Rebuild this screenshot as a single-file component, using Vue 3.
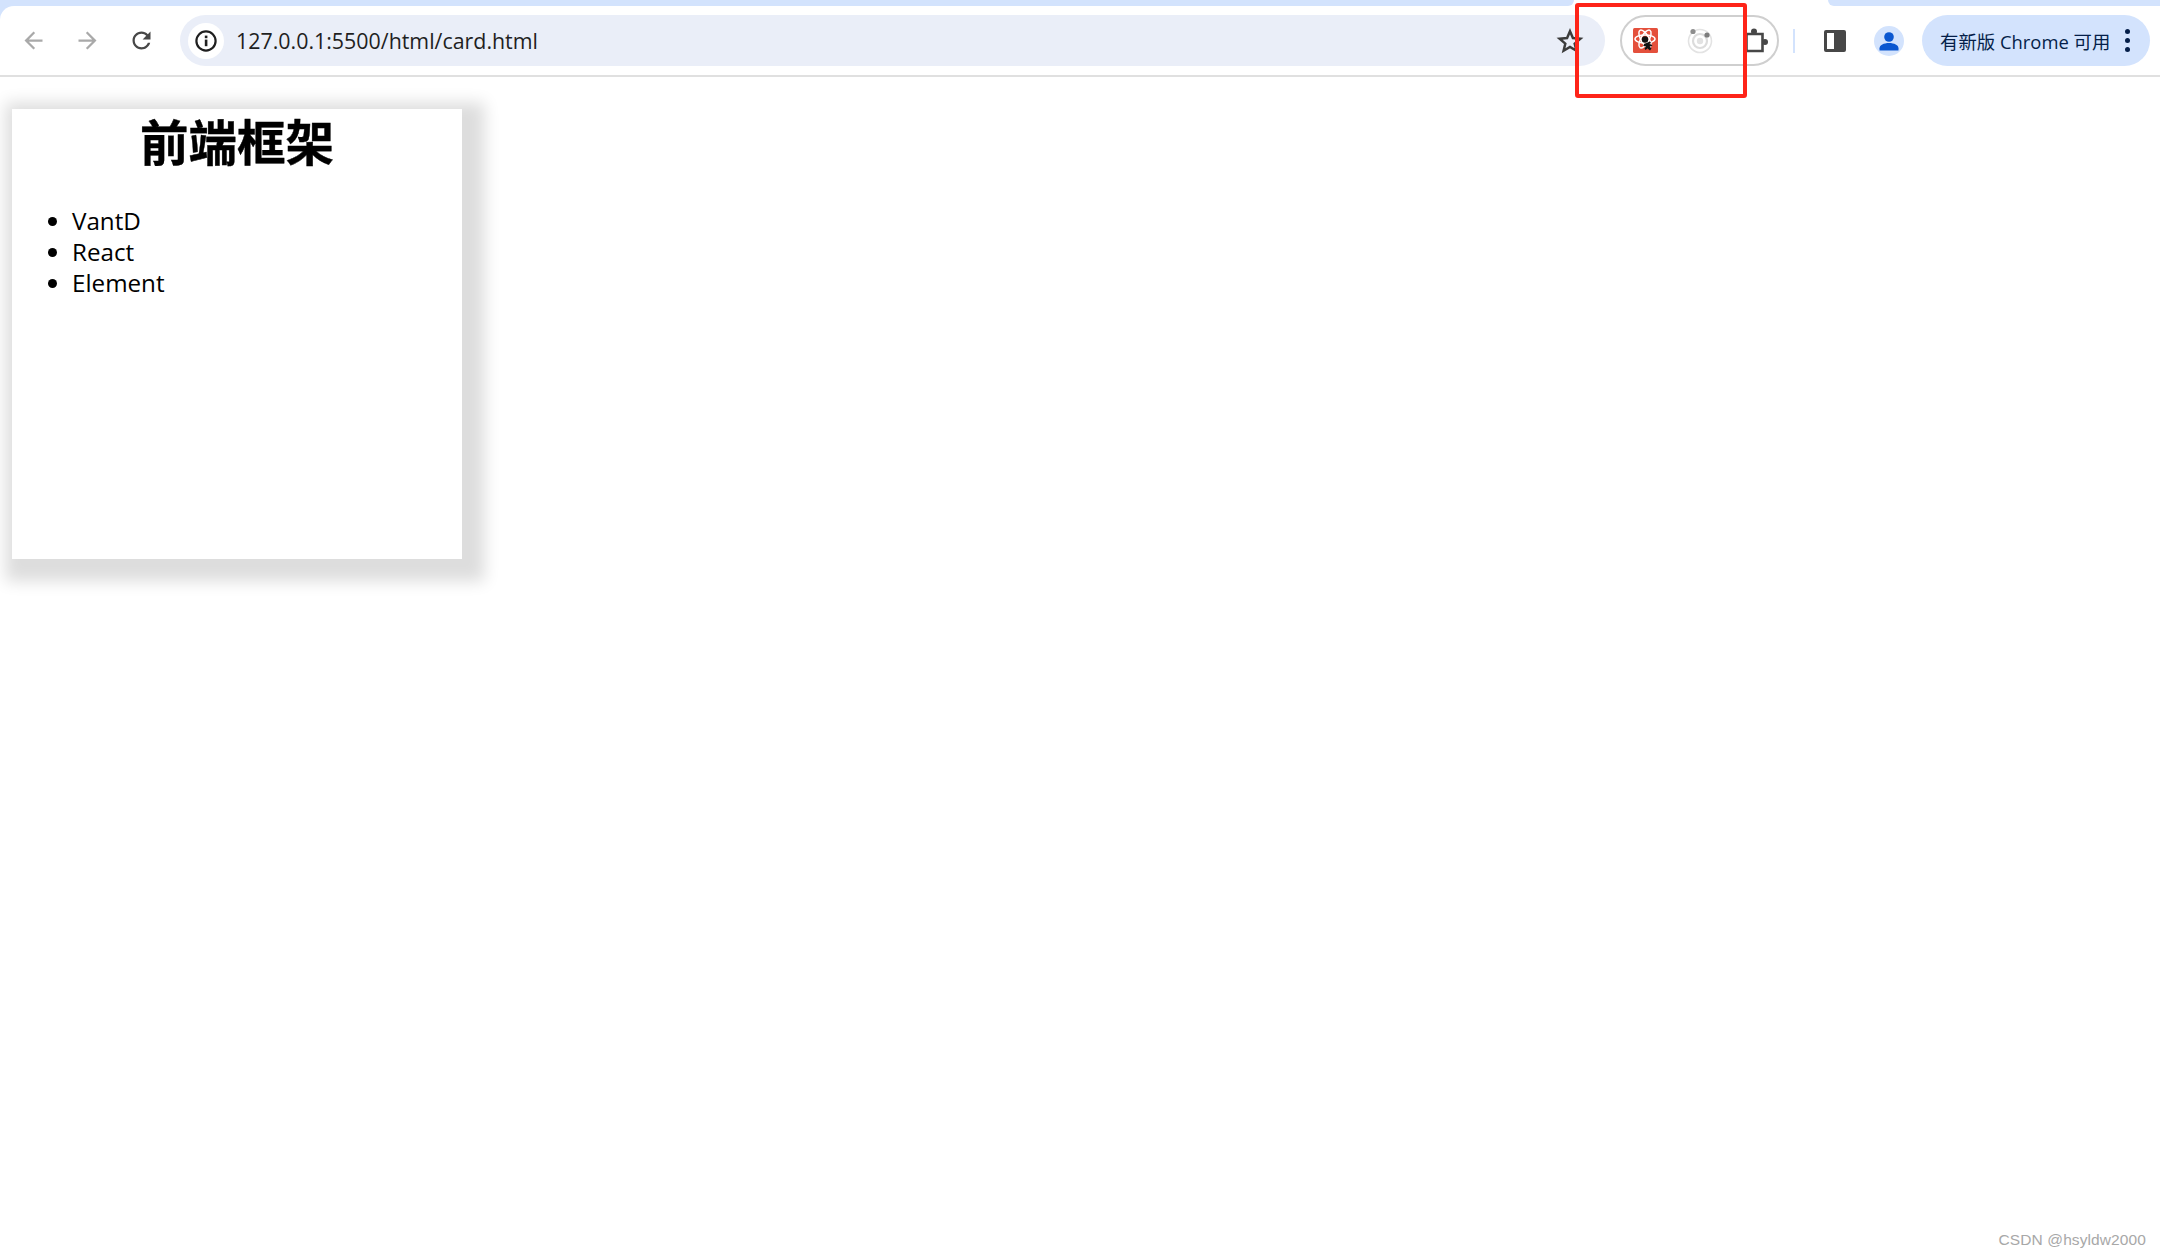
<script setup>
const frameworks = ['VantD', 'React', 'Element']
</script>

<template>
  <div class="page">
    <header class="chrome">
      <div class="tabstrip">
        <div class="strip-left"></div>
        <div class="strip-gap"></div>
        <div class="strip-right"></div>
      </div>
      <div class="toolbar">
        <nav class="nav">
          <svg class="ico ghost" viewBox="0 0 24 24"><path d="M20 11H7.83l5.59-5.59L12 4l-8 8 8 8 1.41-1.41L7.83 13H20v-2z"/></svg>
          <svg class="ico ghost" viewBox="0 0 24 24"><path d="M4 11h12.17l-5.59-5.59L12 4l8 8-8 8-1.41-1.41L16.17 13H4v-2z"/></svg>
          <svg class="ico dark" viewBox="0 0 24 24"><path d="M17.65 6.35C16.2 4.9 14.21 4 12 4c-4.42 0-7.99 3.58-7.99 8s3.57 8 7.99 8c3.73 0 6.84-2.55 7.73-6h-2.08c-.82 2.33-3.04 4-5.65 4-3.31 0-6-2.69-6-6s2.69-6 6-6c1.66 0 3.14.69 4.22 1.78L13 11h7V4l-2.35 2.35z"/></svg>
        </nav>
        <div class="omnibox">
          <span class="site-info">
            <svg viewBox="0 0 24 24" width="24" height="24"><circle cx="12" cy="12" r="9.6" fill="none" stroke="#1f1f1f" stroke-width="2.2"/><rect x="10.8" y="10.6" width="2.6" height="6.6" fill="#1f1f1f"/><rect x="10.8" y="6.6" width="2.6" height="2.6" fill="#1f1f1f"/></svg>
          </span>
          <span class="url">127.0.0.1:5500/html/card.html</span>
          <svg class="star" viewBox="0 0 24 24" width="28" height="28"><path d="M12 3.6l2.500 5.900 6.400.5-4.900 4.200 1.500 6.200L12 17.100l-5.500 3.300L8 14.200 3.100 10l6.400-.5z" fill="none" stroke="#3c3c3c" stroke-width="2.100" stroke-linejoin="miter"/></svg>
        </div>
        <div class="extensions">
          <svg class="ext-atom" viewBox="0 0 25 25" width="25" height="25">
            <rect width="25" height="25" rx="1.500" fill="#e4503c"/>
            <g fill="none" stroke="#fff" stroke-width="1.500">
              <ellipse cx="12" cy="11" rx="10" ry="4"/>
              <ellipse cx="12" cy="11" rx="10" ry="4" transform="rotate(60 12 11)"/>
              <ellipse cx="12" cy="11" rx="10" ry="4" transform="rotate(120 12 11)"/>
            </g>
            <circle cx="12" cy="11.500" r="3.200" fill="#111"/>
            <path d="M11 16l6-2.500 1 1.500-2 1 2.500.5 1 1.500-3 .5 2 2-1.500 2-2.500-2-2 1.500-1-1.500 1.500-2-2.500-.5z" fill="#111"/>
          </svg>
          <svg class="ext-ring" viewBox="0 0 26 26" width="26" height="26">
            <circle cx="13" cy="13" r="11.500" fill="none" stroke="#e3e3e3" stroke-width="1.600"/>
            <circle cx="13" cy="13" r="7" fill="none" stroke="#dcdcdc" stroke-width="2.200"/>
            <circle cx="13" cy="13" r="3.200" fill="#e2e2e2"/>
            <circle cx="6" cy="3.500" r="2.600" fill="#8d8d8d"/>
            <circle cx="20" cy="7" r="2.600" fill="#7d7d7d"/>
          </svg>
          <svg class="ext-puzzle" viewBox="0 0 26 26" width="26" height="26">
            <path d="M3.500 6h16v17h-16z" fill="none" stroke="#474747" stroke-width="2.600"/>
            <circle cx="11" cy="3.500" r="3" fill="#474747"/>
            <circle cx="22" cy="14" r="3" fill="#474747"/>
          </svg>
        </div>
        <span class="divider"></span>
        <span class="side-panel"><span class="side-panel-fill"></span></span>
        <span class="avatar">
          <svg viewBox="0 0 24 24" width="24" height="24"><circle cx="12" cy="8" r="4.800" fill="#0b57d0"/><path d="M2.500 21.500v-2.200c0-3.200 4.300-5.300 9.500-5.300s9.500 2.100 9.500 5.300v2.200z" fill="#0b57d0"/></svg>
        </span>
        <div class="update">
          <span class="update-text">有新版 Chrome 可用</span>
          <span class="dots"><i></i><i></i><i></i></span>
        </div>
      </div>
    </header>

    <main class="content">
      <section class="card">
        <h1>前端框架</h1>
        <ul>
          <li v-for="name in frameworks" :key="name">{{ name }}</li>
        </ul>
      </section>
    </main>

    <div class="annotation"></div>
    <div class="watermark">CSDN @hsyldw2000</div>
  </div>
</template>

<style scoped>
.page {
  position: relative;
  height: 1258px;
  overflow: hidden;
  background: #fff;
  font-family: "Open Sans", "Noto Sans CJK SC", sans-serif;
}
.chrome {
  background: #d3e3fd;
}
.tabstrip {
  display: flex;
  height: 6px;
  background: #fff;
}
.strip-left {
  width: 1574px;
  background: #d3e3fd;
  border-bottom-right-radius: 8px;
}
.strip-gap {
  width: 254px;
}
.strip-right {
  flex: 1;
  background: #d3e3fd;
  border-bottom-left-radius: 8px;
}
.toolbar {
  display: flex;
  align-items: center;
  height: 69px;
  background: #fff;
  border-bottom: 2px solid #e0e0e0;
  border-top-left-radius: 14px;
}
.toolbar > * {
  flex-shrink: 0;
}
.nav {
  display: flex;
  gap: 27px;
  width: 180px;
  padding-left: 20px;
  box-sizing: border-box;
}
.ico {
  width: 27px;
  height: 27px;
}
.ghost { fill: #a9a9a9; }
.dark { fill: #474747; }
.omnibox {
  display: flex;
  align-items: center;
  width: 1425px;
  height: 51px;
  padding: 0 21px 0 8px;
  box-sizing: border-box;
  background: #eaeef8;
  border-radius: 26px;
}
.site-info {
  display: flex;
  align-items: center;
  justify-content: center;
  width: 36px;
  height: 36px;
  border-radius: 50%;
  background: #fff;
}
.url {
  flex: 1;
  margin-left: 12px;
  font-size: 21.4px;
  color: #1f1f1f;
  white-space: nowrap;
}
.extensions {
  display: flex;
  align-items: center;
  width: 159px;
  height: 51px;
  margin-left: 15px;
  padding-left: 11px;
  box-sizing: border-box;
  border: 2px solid #cfcfcf;
  border-radius: 26px;
}
.ext-ring { margin-left: 29px; }
.ext-puzzle { margin-left: 30px; }
.divider {
  width: 2px;
  height: 24px;
  margin-left: 14px;
  background: #d3e3fd;
}
.side-panel {
  display: flex;
  justify-content: flex-end;
  width: 22px;
  height: 22px;
  margin-left: 29px;
  box-sizing: border-box;
  border: 3px solid #474747;
  border-radius: 2px;
  background: #fff;
}
.side-panel-fill {
  width: 9px;
  background: #474747;
}
.avatar {
  display: flex;
  align-items: center;
  justify-content: center;
  width: 30px;
  height: 30px;
  margin-left: 28px;
  border-radius: 50%;
  background: #d3e3fd;
}
.update {
  display: flex;
  align-items: center;
  width: 228px;
  height: 51px;
  margin-left: 18px;
  padding-left: 18px;
  box-sizing: border-box;
  background: #d3e3fd;
  border-radius: 26px;
  color: #041e49;
}
.update-text {
  font-size: 18.4px;
  white-space: nowrap;
}
.dots {
  position: absolute;
  left: 2125px;
  top: 29px;
  display: flex;
  flex-direction: column;
  gap: 4px;
}
.dots i {
  width: 5px;
  height: 5px;
  border-radius: 50%;
  background: #041e49;
}
.content {
  padding: 32px 12px 0;
}
.card {
  width: 450px;
  height: 450px;
  box-sizing: border-box;
  background: #fff;
  box-shadow: 7.5px 7.5px 15px 15px #ddd;
}
h1 {
  margin: 0;
  font-size: 48.5px;
  font-weight: 700;
  line-height: 67px;
  text-align: center;
  color: #000;
  -webkit-text-stroke: 0.4px #000;
}
ul {
  margin: 29px 0 0;
  padding-left: 60px;
  font-size: 24.2px;
  line-height: 31px;
  color: #000;
}
.annotation {
  position: absolute;
  left: 1575px;
  top: 3px;
  width: 172px;
  height: 95px;
  box-sizing: border-box;
  border: 4px solid #fe2419;
  border-radius: 3px;
}
.watermark {
  position: absolute;
  right: 14px;
  bottom: 9px;
  font-family: "Liberation Sans", sans-serif;
  font-size: 15.5px;
  letter-spacing: 0.1px;
  color: #a8a8a8;
}
</style>
